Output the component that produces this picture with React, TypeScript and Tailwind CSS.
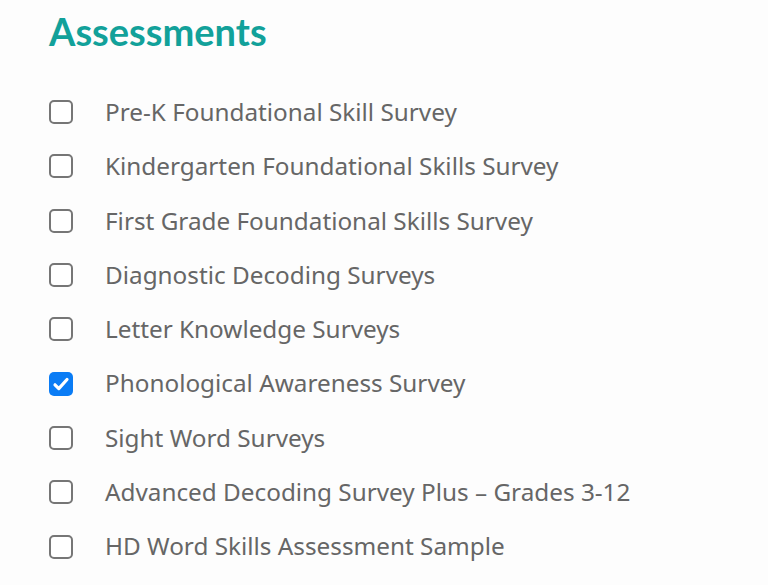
const items = [
  { label: "Pre-K Foundational Skill Survey", checked: false },
  { label: "Kindergarten Foundational Skills Survey", checked: false },
  { label: "First Grade Foundational Skills Survey", checked: false },
  { label: "Diagnostic Decoding Surveys", checked: false },
  { label: "Letter Knowledge Surveys", checked: false },
  { label: "Phonological Awareness Survey", checked: true },
  { label: "Sight Word Surveys", checked: false },
  { label: "Advanced Decoding Survey Plus – Grades 3-12", checked: false },
  { label: "HD Word Skills Assessment Sample", checked: false },
];

function Box({ checked }: { checked: boolean }) {
  if (checked) {
    return (
      <span className="flex h-6 w-6 shrink-0 items-center justify-center rounded-[5px] bg-[#0a7cf5]">
        <svg viewBox="0 0 24 24" className="h-6 w-6" fill="none">
          <path d="M6 12.8l3.8 3.8L18 7.5" stroke="white" strokeWidth="3.2" strokeLinecap="round" strokeLinejoin="round" />
        </svg>
      </span>
    );
  }
  return <span className="h-6 w-6 shrink-0 rounded-[5px] border-2 border-[#767676] bg-white" />;
}

export default function App() {
  return (
    <main className="min-h-[585px] bg-[#fdfdfd] pl-[49px] pt-[8px]">
      <h1 className="font-['Lato',sans-serif] text-[38px] font-bold leading-[46px] text-[#12a19a]">
        Assessments
      </h1>
      <ul className="mt-[31px] flex flex-col">
        {items.map((it) => (
          <li key={it.label} className="flex h-[54.3px] items-center gap-8">
            <Box checked={it.checked} />
            <span className="font-['Noto_Sans',sans-serif] text-[24.3px] text-[#666666]">{it.label}</span>
          </li>
        ))}
      </ul>
    </main>
  );
}
